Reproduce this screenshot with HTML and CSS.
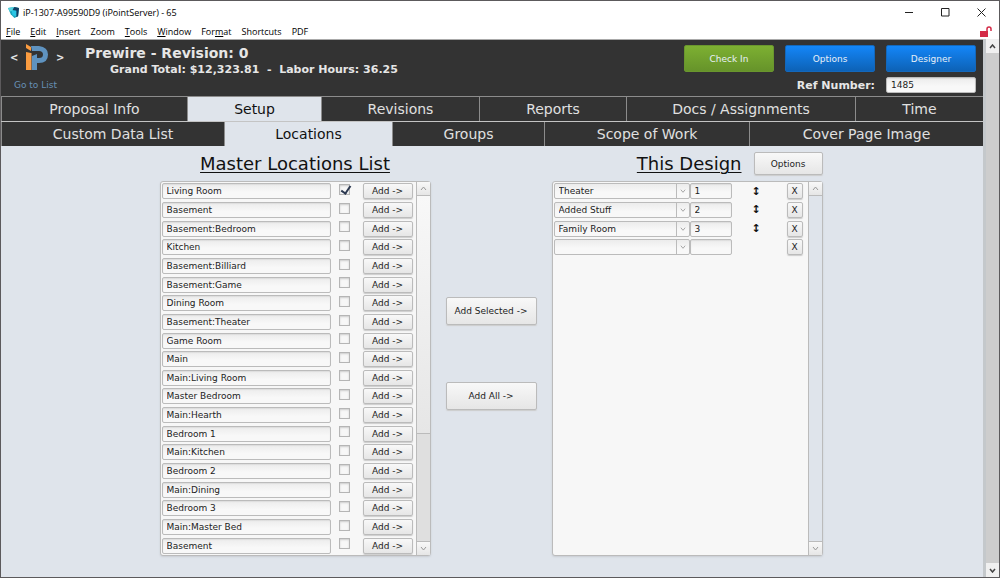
FILE: index.html
```html
<!DOCTYPE html>
<html lang="en">
<head>
  <meta charset="UTF-8" />
  <title>iP-1307-A99590D9 (iPointServer) - 65</title>
  <link rel="stylesheet" href="styles.css">
</head>
<body>

  <!-- Title bar -->
  <div class="titlebar">
    <svg class="app-icon" viewBox="0 0 12 12" aria-hidden="true">
      <path d="M0 1 L7 0 L12 1 L11 10 L7 12 L3 8 Z" fill="#19a5bd"/>
      <path d="M0 1 L7 0 L5 4 L2 5 Z" fill="#55d3df"/>
      <path d="M7 0 L12 1 L11 10 L9 11 L9 4 L5 3 Z" fill="#123d63"/>
      <path d="M4 4 L9 4 L9 10 L5 9 Z" fill="#2ac6e6"/>
    </svg>
    <span class="title-text">iP-1307-A99590D9 (iPointServer) - 65</span>
    <div class="window-buttons">
      <button aria-label="Minimize"><svg viewBox="0 0 9 9"><path d="M0 4.5H8"/></svg></button>
      <button aria-label="Maximize"><svg viewBox="0 0 9 9"><path d="M.5 .5H8V8H.5Z"/></svg></button>
      <button aria-label="Close"><svg viewBox="0 0 9 9"><path d="M.5 .5L8.500 8.500M8.500 .5L.5 8.500"/></svg></button>
    </div>
  </div>

  <!-- Menu -->
  <nav class="menu">
    <a href="#"><u>F</u>ile</a>
    <a href="#"><u>E</u>dit</a>
    <a href="#"><u>I</u>nsert</a>
    <a href="#">Zoom</a>
    <a href="#"><u>T</u>ools</a>
    <a href="#"><u>W</u>indow</a>
    <a href="#">For<u>m</u>at</a>
    <a href="#">Shortcuts</a>
    <a href="#">PDF</a>
    <svg class="lock" viewBox="0 0 12 11" aria-hidden="true">
      <path d="M0 5H8V11H0Z" fill="#d42b47"/>
      <path d="M7 5V3Q7 1 9 1Q11 1 11 3V5" fill="none" stroke="#d42b47" stroke-width="1.500"/>
    </svg>
  </nav>

  <div class="window-body">
    <div class="page">

      <header class="header">
        <div class="brand">
          <div class="brand-nav">
            <button aria-label="Previous">&lt;</button>
            <svg class="logo" viewBox="0 0 24 28" aria-hidden="true">
              <path d="M1 1L6 4V8L1 5Z" fill="#fb9c40"/>
              <path d="M1 9L6 10V27H1Z" fill="#fb9c40"/>
              <path d="M6 3H14Q23 4 23 11.500Q23 20 14 20H12V15H14Q18 15 18 11.500Q18 8 14 8H7Z" fill="#5f93c0"/>
              <path d="M7 13L12 11V27H7Z" fill="#5f93c0"/>
              <path d="M6 10V27" stroke="#eda15c" stroke-width="1"/>
            </svg>
            <button aria-label="Next">&gt;</button>
          </div>
          <a class="go-list" href="#">Go to List</a>
        </div>
        <div class="job">
          <h1>Prewire - Revision: 0</h1>
          <p>Grand Total: $12,323.81 &nbsp;-&nbsp; Labor Hours: 36.25</p>
        </div>
        <div class="actions">
          <div class="action-buttons">
            <button class="btn-main btn-green">Check In</button>
            <button class="btn-main btn-blue">Options</button>
            <button class="btn-main btn-blue">Designer</button>
          </div>
          <div class="ref">
            <label for="ref">Ref Number:</label>
            <input id="ref" type="text" value="1485">
          </div>
        </div>
      </header>

      <nav class="tabs">
        <a href="#">Proposal Info</a>
        <a href="#" class="active">Setup</a>
        <a href="#">Revisions</a>
        <a href="#">Reports</a>
        <a href="#">Docs / Assignments</a>
        <a href="#">Time</a>
      </nav>
      <nav class="tabs subtabs">
        <a href="#">Custom Data List</a>
        <a href="#" class="active">Locations</a>
        <a href="#">Groups</a>
        <a href="#">Scope of Work</a>
        <a href="#">Cover Page Image</a>
      </nav>

      <main class="content">

        <!-- Master list -->
        <section class="column">
          <div class="column-head"><h2>Master Locations List</h2></div>
          <div class="panel">
            <div class="rows">
              <div class="row"><input type="text" aria-label="Location" value="Living Room"><input type="checkbox" aria-label="Select" checked><button class="btn">Add -&gt;</button></div>
              <div class="row"><input type="text" aria-label="Location" value="Basement"><input type="checkbox" aria-label="Select"><button class="btn">Add -&gt;</button></div>
              <div class="row"><input type="text" aria-label="Location" value="Basement:Bedroom"><input type="checkbox" aria-label="Select"><button class="btn">Add -&gt;</button></div>
              <div class="row"><input type="text" aria-label="Location" value="Kitchen"><input type="checkbox" aria-label="Select"><button class="btn">Add -&gt;</button></div>
              <div class="row"><input type="text" aria-label="Location" value="Basement:Billiard"><input type="checkbox" aria-label="Select"><button class="btn">Add -&gt;</button></div>
              <div class="row"><input type="text" aria-label="Location" value="Basement:Game"><input type="checkbox" aria-label="Select"><button class="btn">Add -&gt;</button></div>
              <div class="row"><input type="text" aria-label="Location" value="Dining Room"><input type="checkbox" aria-label="Select"><button class="btn">Add -&gt;</button></div>
              <div class="row"><input type="text" aria-label="Location" value="Basement:Theater"><input type="checkbox" aria-label="Select"><button class="btn">Add -&gt;</button></div>
              <div class="row"><input type="text" aria-label="Location" value="Game Room"><input type="checkbox" aria-label="Select"><button class="btn">Add -&gt;</button></div>
              <div class="row"><input type="text" aria-label="Location" value="Main"><input type="checkbox" aria-label="Select"><button class="btn">Add -&gt;</button></div>
              <div class="row"><input type="text" aria-label="Location" value="Main:Living Room"><input type="checkbox" aria-label="Select"><button class="btn">Add -&gt;</button></div>
              <div class="row"><input type="text" aria-label="Location" value="Master Bedroom"><input type="checkbox" aria-label="Select"><button class="btn">Add -&gt;</button></div>
              <div class="row"><input type="text" aria-label="Location" value="Main:Hearth"><input type="checkbox" aria-label="Select"><button class="btn">Add -&gt;</button></div>
              <div class="row"><input type="text" aria-label="Location" value="Bedroom 1"><input type="checkbox" aria-label="Select"><button class="btn">Add -&gt;</button></div>
              <div class="row"><input type="text" aria-label="Location" value="Main:Kitchen"><input type="checkbox" aria-label="Select"><button class="btn">Add -&gt;</button></div>
              <div class="row"><input type="text" aria-label="Location" value="Bedroom 2"><input type="checkbox" aria-label="Select"><button class="btn">Add -&gt;</button></div>
              <div class="row"><input type="text" aria-label="Location" value="Main:Dining"><input type="checkbox" aria-label="Select"><button class="btn">Add -&gt;</button></div>
              <div class="row"><input type="text" aria-label="Location" value="Bedroom 3"><input type="checkbox" aria-label="Select"><button class="btn">Add -&gt;</button></div>
              <div class="row"><input type="text" aria-label="Location" value="Main:Master Bed"><input type="checkbox" aria-label="Select"><button class="btn">Add -&gt;</button></div>
              <div class="row"><input type="text" aria-label="Location" value="Basement"><input type="checkbox" aria-label="Select"><button class="btn">Add -&gt;</button></div>
            </div>
            <div class="scroll">
              <button aria-label="Scroll up"><svg viewBox="0 0 7 5"><path d="M1 4L3.500 1L6 4"/></svg></button>
              <div class="track"><div class="thumb"></div></div>
              <button aria-label="Scroll down"><svg viewBox="0 0 7 5"><path d="M1 1L3.500 4L6 1"/></svg></button>
            </div>
          </div>
        </section>

        <div class="transfer">
          <button class="btn btn-large">Add Selected -&gt;</button>
          <button class="btn btn-large">Add All -&gt;</button>
        </div>

        <!-- Locations of the design -->
        <section class="column">
          <div class="column-head design-head">
            <h2>This Design</h2>
            <button class="btn btn-options">Options</button>
          </div>
          <div class="panel">
            <div class="rows">
              <div class="design-row">
                <div class="combo"><select aria-label="Location"><option>Theater</option></select><svg viewBox="0 0 7 5"><path d="M1 1L3.500 4L6 1"/></svg></div>
                <input type="text" aria-label="Order" value="1">
                <span class="sort">&#8597;</span>
                <button class="btn">X</button>
              </div>
              <div class="design-row">
                <div class="combo"><select aria-label="Location"><option>Added Stuff</option></select><svg viewBox="0 0 7 5"><path d="M1 1L3.500 4L6 1"/></svg></div>
                <input type="text" aria-label="Order" value="2">
                <span class="sort">&#8597;</span>
                <button class="btn">X</button>
              </div>
              <div class="design-row">
                <div class="combo"><select aria-label="Location"><option>Family Room</option></select><svg viewBox="0 0 7 5"><path d="M1 1L3.500 4L6 1"/></svg></div>
                <input type="text" aria-label="Order" value="3">
                <span class="sort">&#8597;</span>
                <button class="btn">X</button>
              </div>
              <div class="design-row">
                <div class="combo"><select aria-label="Location"><option></option></select><svg viewBox="0 0 7 5"><path d="M1 1L3.500 4L6 1"/></svg></div>
                <input type="text" aria-label="Order" value="">
                <span class="sort"></span>
                <button class="btn">X</button>
              </div>
            </div>
            <div class="scroll">
              <button aria-label="Scroll up"><svg viewBox="0 0 7 5"><path d="M1 4L3.500 1L6 4"/></svg></button>
              <div class="track track-empty"></div>
              <button aria-label="Scroll down"><svg viewBox="0 0 7 5"><path d="M1 1L3.500 4L6 1"/></svg></button>
            </div>
          </div>
        </section>

      </main>
    </div>

    <div class="window-scroll">
      <button aria-label="Page up"><svg viewBox="0 0 7 5"><path d="M1 4L3.500 1L6 4"/></svg></button>
      <div class="window-thumb"></div>
      <button aria-label="Page down"><svg viewBox="0 0 7 5"><path d="M1 1L3.500 4L6 1"/></svg></button>
    </div>
  </div>

</body>
</html>
```

FILE: styles.css
```css
* {
  box-sizing: border-box;
}

body {
  margin: 0;
  height: 100vh;
  display: flex;
  flex-direction: column;
  background: #fff;
  border: 1px solid #5c5a5c;
  font-family: "DejaVu Sans", Verdana, sans-serif;
  font-size: 9px;
  color: #222;
}

button,
input,
select {
  font: inherit;
  color: inherit;
  margin: 0;
}

button {
  padding: 0;
}

a {
  color: inherit;
  text-decoration: none;
}

/* Title bar */
.titlebar {
  display: flex;
  align-items: center;
  height: 23px;
  padding-left: 7px;
  gap: 4px;
  font-family: "Open Sans", "Segoe UI", sans-serif;
  font-size: 9px;
  color: #000;
}

.app-icon {
  width: 11px;
  height: 11px;
}

.window-buttons {
  display: flex;
  margin-left: auto;
}

.window-buttons button {
  width: 36px;
  height: 22px;
  display: flex;
  align-items: center;
  justify-content: center;
  background: none;
  border: none;
}

.window-buttons svg {
  width: 9px;
  height: 9px;
  fill: none;
  stroke: #222;
}

/* Menu */
.menu {
  display: flex;
  align-items: center;
  gap: 10px;
  height: 15px;
  padding: 0 7px 0 5px;
  font-family: "Open Sans", "Segoe UI", sans-serif;
  font-size: 9px;
  color: #000;
}

.lock {
  width: 12px;
  height: 11px;
  margin-left: auto;
}

.window-body {
  flex: 1;
  min-height: 0;
  display: flex;
}

.page {
  flex: 1;
  display: flex;
  flex-direction: column;
  background: #dfe4eb;
  border-top: 1px solid #aaa;
}

/* Header */
.header {
  display: flex;
  height: 56px;
  padding-right: 7px;
  background: #333;
  color: #e6e6e6;
}

.brand {
  width: 84px;
  padding: 3px 0 0 9px;
}

.brand-nav {
  display: flex;
  align-items: center;
  gap: 7px;
}

.brand-nav button {
  width: 8px;
  background: none;
  border: none;
  color: #e6e6e6;
  font-size: 10px;
  font-weight: bold;
}

.logo {
  width: 24px;
  height: 28px;
}

.go-list {
  display: block;
  margin-top: 8px;
  padding-left: 4px;
  line-height: 12px;
  color: #6790b5;
}

.job {
  padding-top: 4px;
}

.job h1 {
  margin: 0;
  font-size: 14px;
  line-height: 18px;
}

.job p {
  margin: 0;
  padding-left: 25px;
  font-size: 11px;
  font-weight: bold;
  line-height: 15px;
}

.actions {
  margin-left: auto;
  padding-top: 5px;
}

.action-buttons {
  display: flex;
  gap: 11px;
}

.btn-main {
  width: 90px;
  height: 27px;
  border-radius: 2px;
  color: #e8f0f8;
}

.btn-green {
  background: linear-gradient(#7db032, #66932a);
  border: 1px solid #6a962e;
}

.btn-blue {
  background: linear-gradient(#1486f8, #0d62b6);
  border: 1px solid #1468bb;
}

.ref {
  display: flex;
  justify-content: flex-end;
  align-items: center;
  gap: 11px;
  margin-top: 5px;
  font-size: 11px;
  font-weight: bold;
}

.ref input {
  width: 90px;
  height: 16px;
  font-size: 9px;
  font-weight: normal;
}

input[type="text"] {
  min-width: 0;
  height: 16px;
  padding: 0 4px;
  background: linear-gradient(#ececec, #f8f8f8 60%);
  border: 1px solid #bbb;
  border-radius: 2px;
  box-shadow: inset 0 1px 1px #ddd;
  color: #222;
}

/* Tabs */
.tabs {
  display: grid;
  grid-template-columns: 186fr 134fr 158fr 147fr 229fr 128fr;
  height: 25px;
  background: #333;
  border-top: 1px solid #8c8c8c;
}

.tabs a {
  display: flex;
  align-items: center;
  justify-content: center;
  border-left: 1px solid #8c8c8c;
  font-size: 14px;
  color: #e0e0e0;
}

.tabs .active {
  background: #dfe4eb;
  color: #111;
}

.subtabs {
  grid-template-columns: 223fr 168fr 152fr 205fr 234fr;
  border-top-color: #c4c4c4;
}

/* Content */
.content {
  flex: 1;
  min-height: 0;
  display: flex;
  justify-content: center;
  gap: 15px;
  padding: 0 2px 21px 0;
}

.column {
  width: 271px;
  display: flex;
  flex-direction: column;
}

.column-head {
  display: flex;
  align-items: center;
  justify-content: center;
  gap: 12px;
  height: 35px;
}

.design-head {
  justify-content: flex-end;
}

.column-head h2 {
  margin: 0;
  font-size: 18px;
  font-weight: normal;
  text-decoration: underline;
  text-decoration-thickness: 1px;
  text-underline-offset: 2px;
  color: #111;
}

.btn {
  height: 16px;
  background: linear-gradient(#f8f8f8, #e6e6e6);
  border: 1px solid #bbb;
  border-radius: 2px;
  box-shadow: 0 1px 1px #ccc;
}

.btn-options {
  width: 69px;
  height: 23px;
}

.btn-large {
  width: 91px;
  height: 28px;
}

.panel {
  flex: 1;
  min-height: 0;
  display: flex;
  background: #f7f7f7;
  border: 1px solid #bbb;
  border-radius: 3px;
  box-shadow: 0 1px 2px #c8ccd2;
}

.rows {
  flex: 1;
  display: grid;
  grid-template-rows: repeat(20, 1fr);
}

.row {
  display: grid;
  grid-template-columns: 169px 24px 50px;
  column-gap: 4px;
  align-items: center;
  padding-left: 1px;
}

.row input[type="checkbox"] {
  appearance: none;
  align-self: start;
  margin: 2px 0 0 4px;
  width: 11px;
  height: 11px;
  background: #f7f7f7;
  border: 1px solid #b5b5b5;
  box-shadow: inset 0 1px 2px #ccc;
}

.row input[type="checkbox"]:checked::before {
  content: "";
  display: block;
  width: 4px;
  height: 8px;
  margin: -1px 0 0 3px;
  border: solid #2b3850;
  border-width: 0 2px 2px 0;
  transform: rotate(35deg);
}

.transfer {
  display: flex;
  flex-direction: column;
  gap: 57px;
  padding-top: 151px;
}

.design-row {
  display: grid;
  grid-template-columns: 136px 42px 49px 16px;
  align-items: center;
  padding-left: 1px;
}

.design-row .btn {
  margin-left: 6px;
  width: 16px;
}

.combo {
  display: grid;
  grid-template-columns: 1fr 13px;
  align-items: center;
  height: 16px;
  background: linear-gradient(#ececec, #f8f8f8 60%);
  border: 1px solid #bbb;
  border-radius: 2px;
}

.combo select {
  appearance: none;
  height: 14px;
  padding: 0 4px;
  background: none;
  border: none;
}

.combo svg {
  width: 13px;
  height: 14px;
  padding: 4px 3px;
  border-left: 1px solid #bbb;
}

.combo svg,
.scroll svg {
  fill: none;
  stroke: #999;
}

.sort {
  text-align: center;
  font-size: 11px;
  font-weight: bold;
  color: #111;
}

/* List scroll bars */
.scroll {
  width: 14px;
  display: flex;
  flex-direction: column;
  border-left: 1px solid #bbb;
}

.scroll button {
  height: 13px;
  display: flex;
  align-items: center;
  justify-content: center;
  background: linear-gradient(#f8f8f8, #e6e6e6);
  border: none;
}

.scroll svg {
  width: 7px;
  height: 5px;
}

.track {
  flex: 1;
  background: #dfdfdf;
  border: solid #bbb;
  border-width: 1px 0;
}

.track-empty {
  background: #dfe4eb;
}

.thumb {
  height: 69%;
  background: linear-gradient(#f8f8f8, #e6e6e6);
  border-bottom: 1px solid #bbb;
}

/* Window scroll bar */
.window-scroll {
  width: 16px;
  display: flex;
  flex-direction: column;
  background: #f0f0f0;
  border-left: 3px solid #c4c8cb;
}

.window-scroll button {
  height: 14px;
  display: flex;
  align-items: center;
  justify-content: center;
  background: none;
  border: none;
}

.window-scroll svg {
  width: 7px;
  height: 5px;
  fill: none;
  stroke: #444;
  stroke-width: 1.500;
}

.window-thumb {
  flex: 1;
  background: #cdcdcd;
}
```
